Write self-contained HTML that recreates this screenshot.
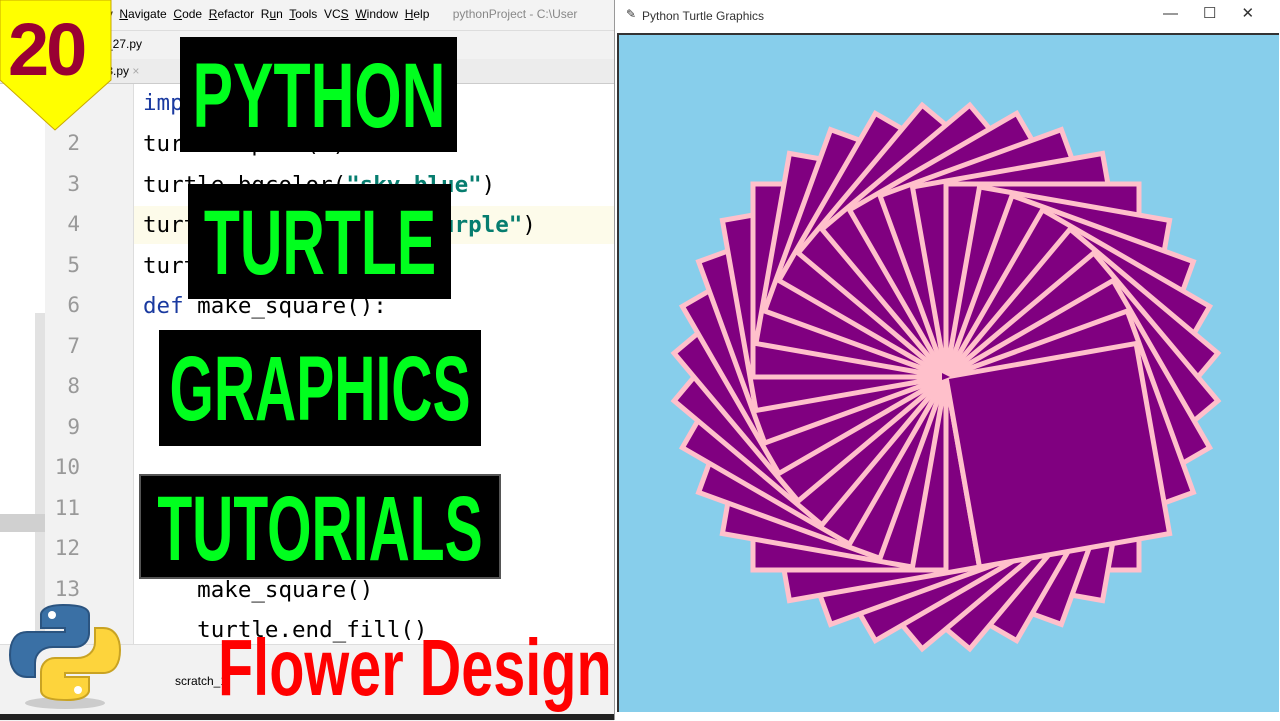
<!DOCTYPE html>
<html><head><meta charset="utf-8"><style>
body{margin:0;width:1280px;height:720px;overflow:hidden;background:#fff;position:relative;font-family:"Liberation Sans",sans-serif}
.abs{position:absolute}
.code{font-family:"DejaVu Sans Mono","Liberation Mono",monospace;font-size:22.5px;position:absolute;left:143px;white-space:pre;color:#000}
.ln{font-family:"DejaVu Sans Mono",monospace;font-size:21px;color:#999;position:absolute;left:50px;width:30px;text-align:right}
.lab{position:absolute;background:#000;color:#00ff1e;font-weight:bold;font-family:"Liberation Sans",sans-serif;overflow:hidden}
.lab span{position:absolute;left:50%;top:0;white-space:nowrap;transform:translateX(-50%) scaleX(0.7)}
.str{color:#067d6f;font-weight:bold}
</style></head><body>
<div class="abs" style="left:0;top:0;width:614px;height:30px;background:#f3f3f3;border-bottom:1px solid #ddd"></div>
<div class="abs" style="left:104px;top:7px;font-size:12px;color:#000;white-space:pre">w  <u>N</u>avigate  <u>C</u>ode  <u>R</u>efactor  R<u>u</u>n  <u>T</u>ools  VC<u>S</u>  <u>W</u>indow  <u>H</u>elp       <span style="color:#888">pythonProject - C:\User</span></div>
<div class="abs" style="left:0;top:31px;width:614px;height:28px;background:#f2f2f2;border-bottom:1px solid #ddd"></div>
<div class="abs" style="left:90px;top:37px;font-size:12px">tch_27.py</div>
<div class="abs" style="left:0;top:59px;width:614px;height:24px;background:#ececec;border-bottom:1px solid #ccc"></div>
<div class="abs" style="left:93px;top:64px;font-size:12px">_28.py <span style="color:#aaa">×</span></div>
<div class="abs" style="left:45px;top:84px;width:88px;height:560px;background:#f2f2f2;border-right:1px solid #ddd"></div>
<div class="abs" style="left:35px;top:313px;width:10px;height:330px;background:#e2e2e2"></div>
<div class="abs" style="left:0;top:514px;width:45px;height:18px;background:#d0d0d0"></div>
<div class="abs" style="left:134px;top:206px;width:480px;height:38px;background:#fdfbea"></div>
<div class="abs" style="left:0;top:644px;width:614px;height:76px;background:#f2f2f2;border-top:1px solid #ddd"></div>
<div class="abs" style="left:175px;top:674px;font-size:12px">scratch_1</div>
<div class="abs" style="left:0;top:714px;width:614px;height:6px;background:#222"></div>
<div class="ln" style="top:131px">2</div><div class="ln" style="top:172px">3</div><div class="ln" style="top:212px">4</div><div class="ln" style="top:253px">5</div><div class="ln" style="top:293px">6</div><div class="ln" style="top:334px">7</div><div class="ln" style="top:374px">8</div><div class="ln" style="top:415px">9</div><div class="ln" style="top:455px">10</div><div class="ln" style="top:496px">11</div><div class="ln" style="top:536px">12</div><div class="ln" style="top:577px">13</div>
<div class="code" style="top:90px;color:#1a3aa0">imp</div>
<div class="code" style="top:131px">turtle.speed(0)</div>
<div class="code" style="top:172px">turtle.bgcolor(<span class="str">"sky blue"</span>)</div>
<div class="code" style="top:212px">turtle.color(<span class="str">"pink","purple"</span>)</div>
<div class="code" style="top:253px">turtle.pensize(5)</div>
<div class="code" style="top:293px"><span style="color:#1a3aa0">def</span> make_square():</div>
<div class="code" style="top:374px">    turtle.forward(<span style="color:#1750eb">200</span>)</div>
<div class="code" style="top:577px">    make_square()</div>
<div class="code" style="top:617px">    turtle.end_fill()</div>
<div class="lab" style="left:180px;top:37px;width:277px;height:115px;font-size:92px;line-height:118px"><span style="transform:translateX(-50%) scaleX(0.66)">PYTHON</span></div>
<div class="lab" style="left:188px;top:184px;width:263px;height:115px;font-size:92px;line-height:118px"><span style="transform:translateX(-50%) scaleX(0.64)">TURTLE</span></div>
<div class="lab" style="left:159px;top:330px;width:322px;height:116px;font-size:92px;line-height:118px"><span style="transform:translateX(-50%) scaleX(0.62)">GRAPHICS</span></div>
<div class="lab" style="left:139px;top:474px;width:358px;height:101px;font-size:92px;line-height:106px;border:2px solid #555"><span style="transform:translateX(-50%) scaleX(0.62)">TUTORIALS</span></div>
<div class="abs" style="left:218px;top:628px;width:400px;height:80px;color:#f00;font-weight:bold;font-size:80px;line-height:80px;white-space:nowrap"><span style="display:inline-block;transform:scaleX(0.72);transform-origin:left">Flower Design</span></div>
<svg class="abs" style="left:0;top:0" width="112" height="132"><polygon points="0,0 111,0 111,80 55,130 0,80" fill="#ffff00" stroke="#c9a800" stroke-width="1"/></svg>
<div class="abs" style="left:8px;top:10px;font-size:74px;line-height:80px;font-weight:bold;color:#990033;letter-spacing:-3px">20</div>
<svg class="abs" style="left:5px;top:600px" width="120" height="110" viewBox="0 0 120 110">
<ellipse cx="60" cy="103" rx="40" ry="6" fill="#ccc"/>
<path d="M58 5 C35 5 36 15 36 15 L36 28 L60 28 L60 32 L22 32 C10 32 5 42 5 55 C5 68 11 77 22 77 L30 77 L30 63 C30 53 38 47 48 47 L70 47 C78 47 84 41 84 33 L84 15 C84 8 76 5 58 5Z" fill="#3a70a5" stroke="#2b5480" stroke-width="2"/>
<circle cx="47" cy="15" r="4" fill="#fff"/>
<path d="M62 100 C85 100 84 90 84 90 L84 77 L60 77 L60 73 L98 73 C110 73 115 63 115 50 C115 37 109 28 98 28 L90 28 L90 42 C90 52 82 58 72 58 L50 58 C42 58 36 64 36 72 L36 90 C36 97 44 100 62 100Z" fill="#fdd43c" stroke="#c9a323" stroke-width="2"/>
<circle cx="73" cy="90" r="4" fill="#fff"/>
</svg>
<div class="abs" style="left:614px;top:0;width:666px;height:720px;background:#fff;border-left:1px solid #999"></div>
<div class="abs" style="left:642px;top:9px;font-size:12px;color:#333">Python Turtle Graphics</div>
<div class="abs" style="left:626px;top:7px;font-size:12px;color:#333">✎</div>
<div class="abs" style="left:1163px;top:4px;font-size:15px;color:#333;white-space:pre">—      ☐      ✕</div>
<div class="abs" style="left:617px;top:33px;width:662px;height:679px;background:#87ceeb;border-left:2px solid #333;border-top:2px solid #333;box-sizing:border-box"></div>
<svg class="abs" style="left:0;top:0" width="1280" height="720">
<g transform="translate(946,377)" fill="#800080" stroke="#ffc0cb" stroke-width="5">
<rect width="193" height="193" transform="rotate(0)"/><rect width="193" height="193" transform="rotate(-350)"/><rect width="193" height="193" transform="rotate(-340)"/><rect width="193" height="193" transform="rotate(-330)"/><rect width="193" height="193" transform="rotate(-320)"/><rect width="193" height="193" transform="rotate(-310)"/><rect width="193" height="193" transform="rotate(-300)"/><rect width="193" height="193" transform="rotate(-290)"/><rect width="193" height="193" transform="rotate(-280)"/><rect width="193" height="193" transform="rotate(-270)"/><rect width="193" height="193" transform="rotate(-260)"/><rect width="193" height="193" transform="rotate(-250)"/><rect width="193" height="193" transform="rotate(-240)"/><rect width="193" height="193" transform="rotate(-230)"/><rect width="193" height="193" transform="rotate(-220)"/><rect width="193" height="193" transform="rotate(-210)"/><rect width="193" height="193" transform="rotate(-200)"/><rect width="193" height="193" transform="rotate(-190)"/><rect width="193" height="193" transform="rotate(-180)"/><rect width="193" height="193" transform="rotate(-170)"/><rect width="193" height="193" transform="rotate(-160)"/><rect width="193" height="193" transform="rotate(-150)"/><rect width="193" height="193" transform="rotate(-140)"/><rect width="193" height="193" transform="rotate(-130)"/><rect width="193" height="193" transform="rotate(-120)"/><rect width="193" height="193" transform="rotate(-110)"/><rect width="193" height="193" transform="rotate(-100)"/><rect width="193" height="193" transform="rotate(-90)"/><rect width="193" height="193" transform="rotate(-80)"/><rect width="193" height="193" transform="rotate(-70)"/><rect width="193" height="193" transform="rotate(-60)"/><rect width="193" height="193" transform="rotate(-50)"/><rect width="193" height="193" transform="rotate(-40)"/><rect width="193" height="193" transform="rotate(-30)"/><rect width="193" height="193" transform="rotate(-20)"/>
<circle cx="-2" cy="-2" r="16" fill="#ffc0cb" stroke="none"/>
<rect width="193" height="193" transform="rotate(-10)"/>
<polygon points="-4,-4 4,0 -4,3" fill="#800080" stroke="none"/>
</g></svg>
</body></html>
